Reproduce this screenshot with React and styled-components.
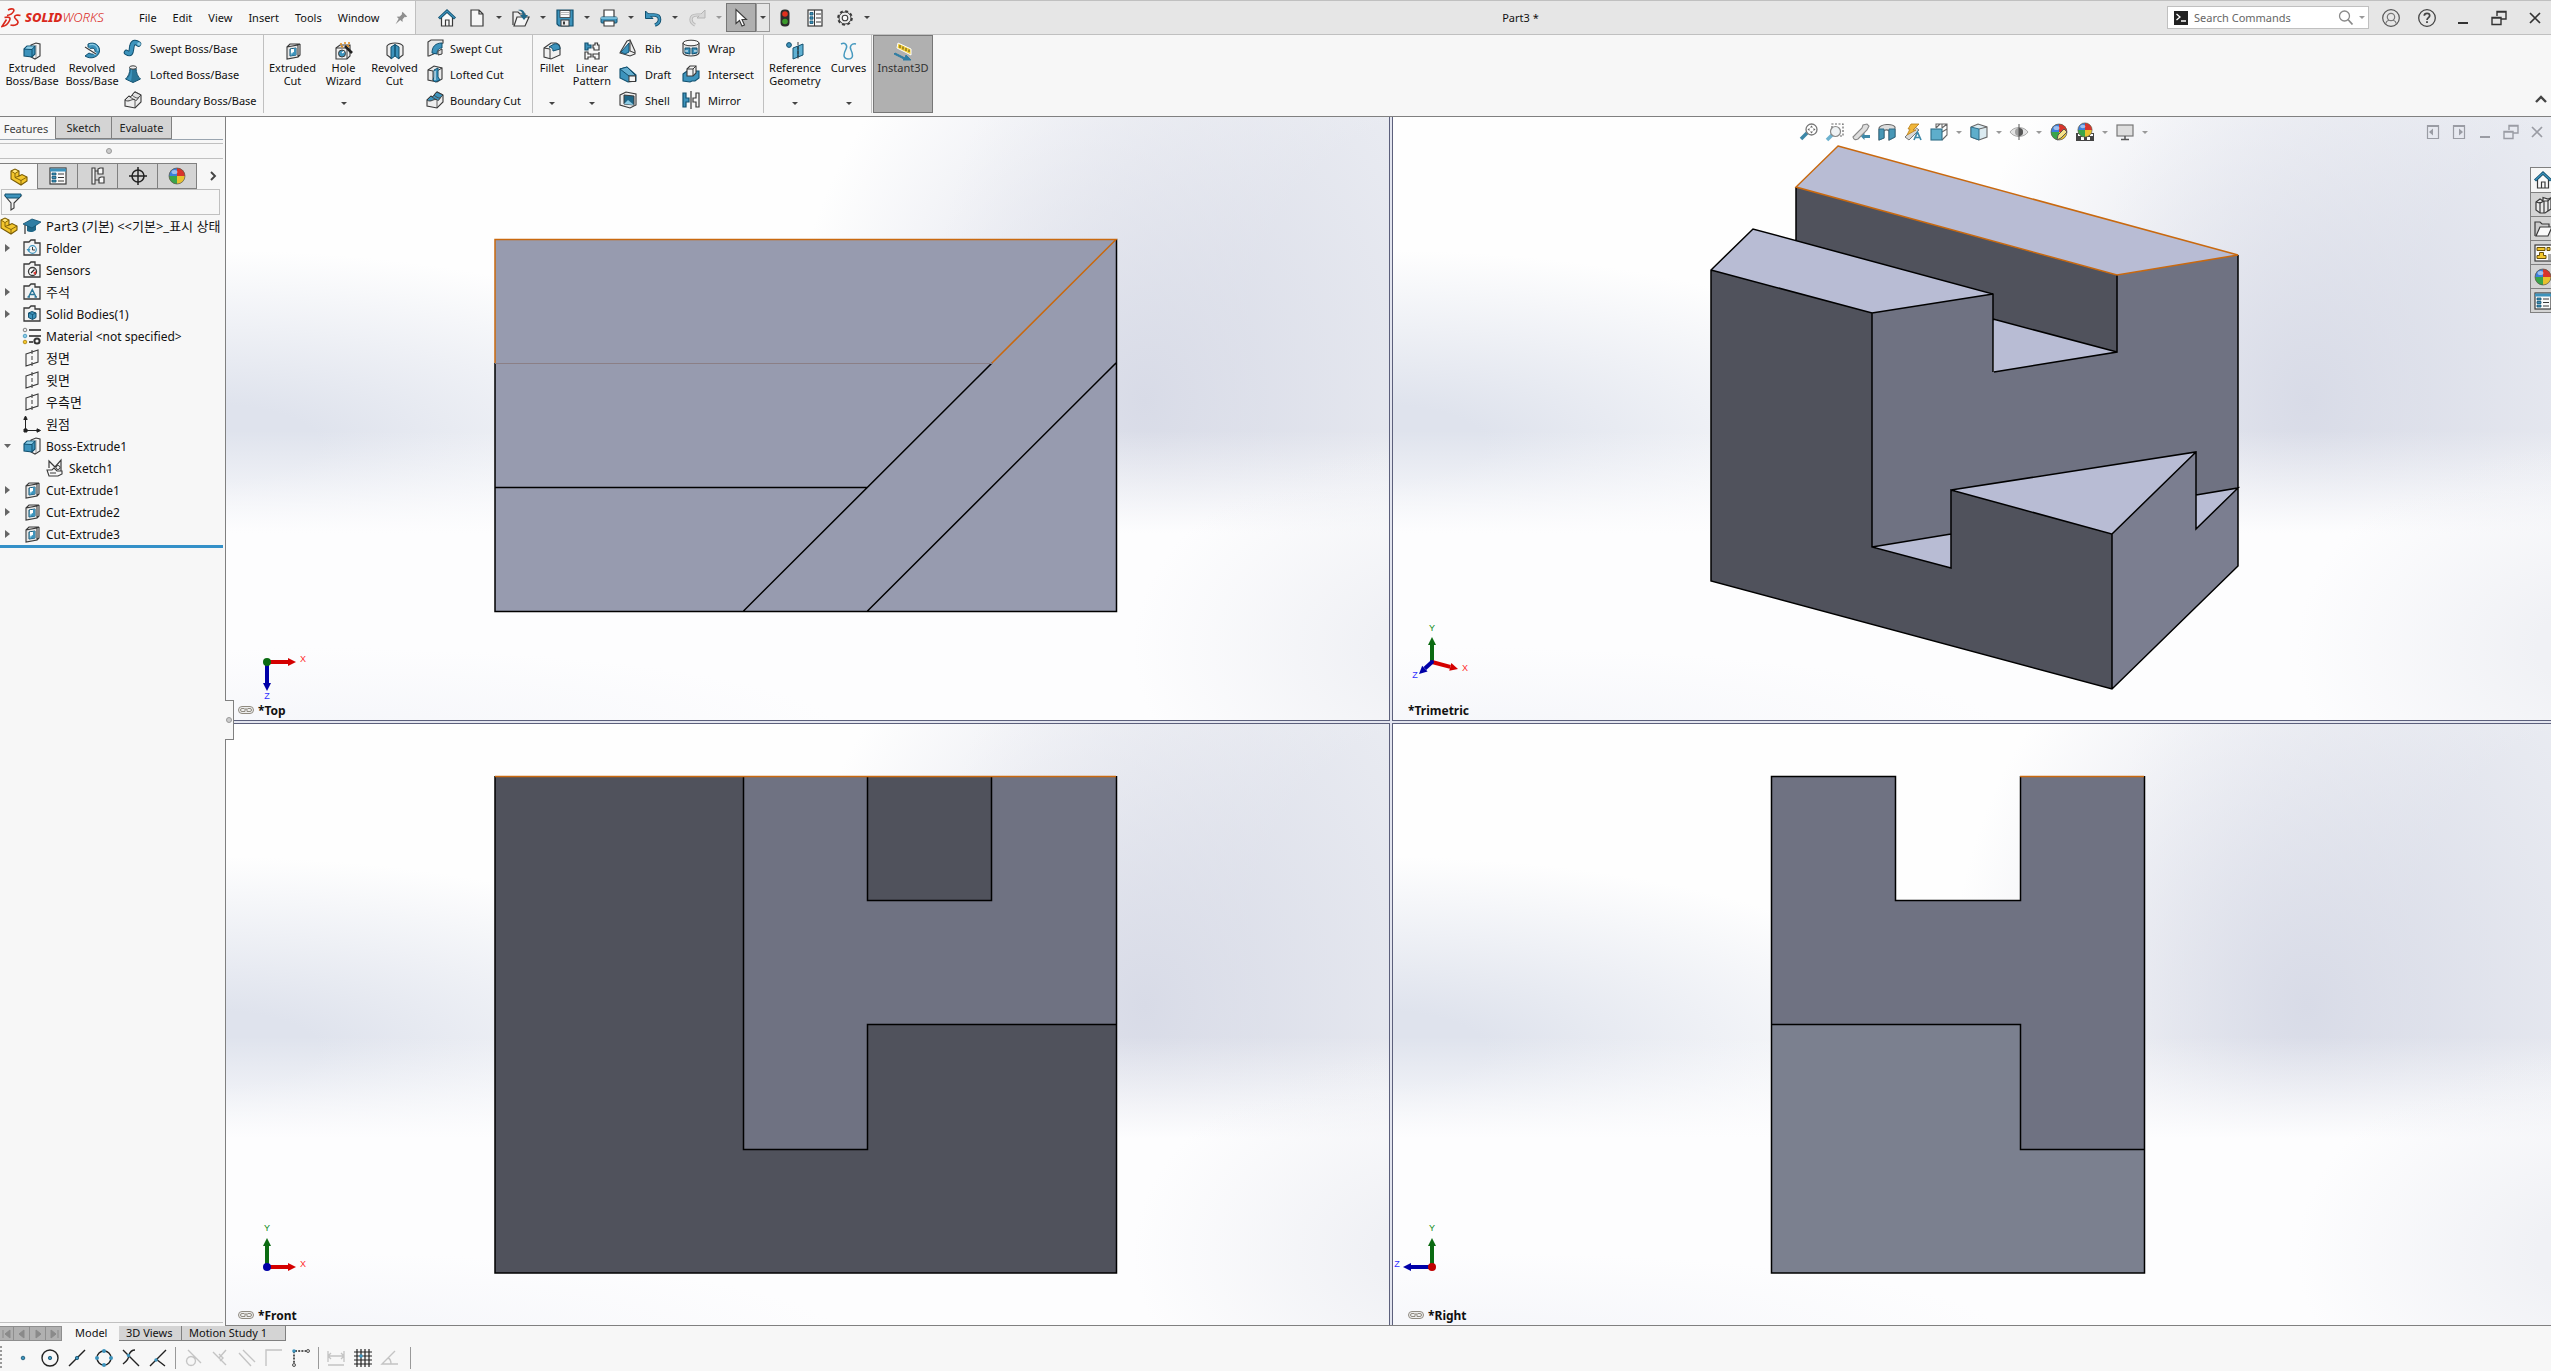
import React from "react";
import styled, { createGlobalStyle } from "styled-components";

const INK = "#3a3a3a";
const BLUE = "#3d93bc";
const SKY = "#8ccbe4";
const NAVY = "#12506f";

const Global = createGlobalStyle`
  html, body, #root { height: 100%; }
  body { margin: 0; background: #f7f7f7; color: #111; }
  body, button, input { font-family: "Noto Sans", "Noto Sans CJK KR", sans-serif; font-size: 11px; line-height: 13px; }
  * { box-sizing: border-box; }
  button { border: 0; padding: 0; background: none; color: inherit; }
  ul { list-style: none; margin: 0; padding: 0; }
`;

/* ---------- icons ---------- */

const ball = (
  <>
    <circle cx="9" cy="9" r="8" fill="#e9c12e" />
    <path d="M9 9V1A8 8 0 0 0 1 9Z" fill="#3c7fdc" />
    <path d="M9 9V1A8 8 0 0 1 17 9Z" fill="#d8342c" />
    <path d="M9 9H1A8 8 0 0 0 9 17Z" fill="#3aa54a" />
    <circle cx="9" cy="9" r="8" fill="none" stroke="#555" strokeWidth="0.7" />
    <ellipse cx="6.500" cy="5" rx="3" ry="2" fill="#fff" opacity="0.5" />
  </>
);
const folder = <path d="M1 16V3H6L8 1H12V4H17V16Z" fill="#f2f2f2" stroke={INK} strokeWidth="1.3" />;
const cutBox = (
  <>
    <path d="M3 5L14 3V15L3 17ZM3 5L6 2H16L14 3M16 2V13L14 15" fill="#e6e6e6" stroke={INK} strokeWidth="1.1" />
    <path d="M6 7L12 6V13L6 14Z" fill={SKY} stroke={NAVY} />
    <path d="M9 6.500V11L6 14L12 13V6Z" fill={BLUE} />
    <path d="M7 7H10V10L7 11Z" fill="#fff" />
  </>
);
const house = (
  <>
    <path d="M3.500 8V17H14.500V8L9 3Z" fill="#fafafa" stroke={INK} strokeWidth="1.2" />
    <path d="M7.500 17V11H11V17" fill="none" stroke={INK} strokeWidth="1.2" />
    <path d="M1 9.500L9 2L17 9.500" fill="none" stroke={NAVY} strokeWidth="3" />
    <path d="M1.500 9L9 2L16.500 9" fill="none" stroke={BLUE} strokeWidth="1.2" />
  </>
);
const list = (
  <>
    <rect x="1" y="1" width="16" height="16" fill="#fafafa" stroke={INK} strokeWidth="1.2" />
    <path d="M1 3H17" stroke={BLUE} strokeWidth="3" />
    <path d="M3 6H7V8H3ZM3 9.500H7V11.500H3ZM3 13H7V15H3Z" fill={BLUE} stroke={NAVY} strokeWidth="0.8" />
    <path d="M9 7H15M9 10.500H15M9 14H15" stroke={INK} strokeWidth="1.2" />
  </>
);
const bossBox = (
  <>
    <path d="M8 3L13 1L17 2V14L12 17L8 15Z" fill="#f4f4f4" stroke={INK} strokeWidth="1.1" />
    <path d="M13 3V16" stroke="#999" />
    <path d="M1 7L4 4H12V12L9 15L1 14Z" fill={BLUE} stroke={NAVY} strokeWidth="1.1" />
    <path d="M1 7L9 7.500L12 4M9 7.500V15" fill="none" stroke={NAVY} />
    <path d="M2 6.500L4.500 4.500H11L8.500 7Z" fill={SKY} />
  </>
);
const yellowPart = (
  <>
    <path d="M1 3L5 1L9 3V8L12 6.500L17 9V13L11 17L1 11Z" fill="#f3c62c" stroke="#7a5c06" strokeWidth="1.1" />
    <path d="M1 3L5 5.500L9 3M5 5.500V9.500L11 12.500L17 9M11 12.500V17M5 9.500L9 8" fill="none" stroke="#7a5c06" strokeWidth="0.9" />
    <path d="M2.500 3.200L5 1.800L7.500 3.200L5 4.700Z" fill="#ffe889" />
  </>
);
const boundary = (top) => (
  <>
    <path d="M1 9L5 5C7 8 8 3 11 1L17 4V11L11 17L1 15Z" fill="#eee" stroke={INK} strokeWidth="1.1" />
    <path d="M1 9L5 5C7 8 8 3 11 1L17 4C14 6 13 11 11 9C8 7 5 12 1 9Z" fill={top} stroke={INK} />
    <path d="M5 5C7 7 9 8 11 9M8 4C10 6 12 7 14 7M11 10V17" fill="none" stroke={INK} strokeWidth="0.8" />
  </>
);

const ICONS = {
  home: house,
  page: <path d="M3 1H11L15 5V17H3ZM11 1V5H15" fill="#f6f6f6" stroke={INK} strokeWidth="1.2" />,
  open: (
    <>
      <path d="M1 16V3H6L8 5H13V8" fill="#eee" stroke={INK} strokeWidth="1.2" />
      <path d="M2 17L5 8H17L13 17Z" fill="#f6f6f6" stroke={INK} strokeWidth="1.2" />
      <path d="M6 1C10 0 13 2 13 6H16L12 11L8 6H10.500C10.500 3 9 2 6 1Z" fill="#1f6788" />
    </>
  ),
  save: (
    <>
      <path d="M1 1H17V17H3L1 15Z" fill={BLUE} stroke={NAVY} strokeWidth="1.2" />
      <rect x="4" y="1.500" width="10" height="7" fill="#fafafa" stroke={INK} strokeWidth="0.8" />
      <path d="M5 3.500H13M5 5.500H13" stroke="#aaa" strokeWidth="0.8" />
      <rect x="5" y="11" width="8" height="6" fill="#eee" stroke={INK} />
      <rect x="7" y="12.500" width="2" height="3" fill={INK} />
    </>
  ),
  print: (
    <>
      <path d="M4 8V1H14V8" fill="#fff" stroke={INK} strokeWidth="1.2" />
      <rect x="1" y="8" width="16" height="6" rx="1" fill={BLUE} stroke={NAVY} />
      <path d="M1 9H17" stroke={SKY} strokeWidth="1.500" />
      <path d="M4 12H14V17H4Z" fill="#fff" stroke={INK} strokeWidth="1.1" />
    </>
  ),
  undo: (
    <>
      <path d="M4 6H10C14 6 15.500 8 15.500 10.500C15.500 12.500 14 15 11 16" fill="none" stroke={NAVY} strokeWidth="3.600" />
      <path d="M1.500 2V9.500H9Z" fill={BLUE} stroke={NAVY} />
      <path d="M4 6H10C14 6 15.500 8 15.500 10.500C15.500 12.500 14 15 11 16" fill="none" stroke={BLUE} strokeWidth="1.800" />
    </>
  ),
  redo: (
    <>
      <path d="M14 6H9C5 6 3 8 3 10.500C3 13 4 14.500 7 16" fill="none" stroke="#b5b5b5" strokeWidth="3.200" />
      <path d="M17 1V9H9Z" fill="#d8d8d8" stroke="#b5b5b5" />
      <path d="M14 6H9C5 6 3 8 3 10.500C3 13 4 14.500 7 16" fill="none" stroke="#d8d8d8" strokeWidth="1.600" />
    </>
  ),
  cursor: <path d="M4 0.500V14.500L7.500 11.500L10 17L12.500 16L10 10.500H14.500Z" fill="#fff" stroke={INK} strokeWidth="1.1" />,
  traffic: (
    <>
      <rect x="4.500" y="0.500" width="9" height="17" rx="4" fill="#2c2c2c" />
      <circle cx="9" cy="5" r="2.800" fill="#e0301e" />
      <circle cx="9" cy="12.500" r="2.800" fill="#3a9a2a" />
    </>
  ),
  options: (
    <>
      <rect x="2" y="1" width="14" height="16" fill="#fafafa" stroke={INK} strokeWidth="1.2" />
      <path d="M4 3.500H7V6H4ZM4 7.800H7V10.200H4ZM4 12H7V14.500H4Z" fill={BLUE} stroke={NAVY} strokeWidth="0.8" />
      <path d="M8.500 1V17M10 5H15M10 9H15M10 13H15" stroke={INK} />
    </>
  ),
  gear: (
    <>
      <circle cx="9" cy="9" r="6.700" fill="none" stroke={INK} strokeWidth="2.200" strokeDasharray="2.900 2.360" />
      <circle cx="9" cy="9" r="6" fill="#ececec" stroke={INK} strokeWidth="1" />
      <circle cx="9" cy="9" r="2.800" fill="#fafafa" stroke={INK} strokeWidth="1.1" />
    </>
  ),
  pin: <path d="M11 1L17 7L15 8L14 7.500L11 10.500V14L8 11.500L2 17L6 10L3.500 7.500L7.500 7L10.500 4L10 3Z" fill="#8f8f8f" />,
  terminal: (
    <>
      <rect x="2" y="2" width="14" height="14" fill="#222" />
      <path d="M4.500 5L8 8L4.500 11M9 12H14" fill="none" stroke="#fff" strokeWidth="1.300" />
    </>
  ),
  search: (
    <>
      <circle cx="7.500" cy="7" r="5" fill="none" stroke="#8a8a8a" strokeWidth="1.300" />
      <path d="M11 10.500L15.500 15.500" stroke="#8a8a8a" strokeWidth="1.800" />
    </>
  ),
  user: (
    <>
      <circle cx="9" cy="9" r="8.300" fill="none" stroke="#555" strokeWidth="1.200" />
      <circle cx="9" cy="8" r="3.700" fill="none" stroke="#777" strokeWidth="1.200" />
      <path d="M3.500 15C4 12.500 5.500 11.500 7 11M14.500 15C14 12.500 12.500 11.500 11 11" fill="none" stroke="#777" strokeWidth="1.200" />
    </>
  ),
  help: (
    <>
      <circle cx="9" cy="9" r="8.300" fill="none" stroke="#444" strokeWidth="1.300" />
      <path d="M6.300 6.800C6.300 3.600 11.700 3.700 11.700 6.700C11.700 8.500 9 8.800 9 11" fill="none" stroke="#444" strokeWidth="1.700" />
      <rect x="8.100" y="12.200" width="1.800" height="1.800" fill="#444" />
    </>
  ),
  minimize: <path d="M4 14H14" stroke="currentColor" strokeWidth="2" />,
  restore: <path d="M7 7V2.500H16V10H11M2 8.500H11V15.500H2ZM7 3H16M2 9H11" fill="none" stroke="currentColor" strokeWidth="1.400" />,
  close: <path d="M4 4L14 14M14 4L4 14" stroke="currentColor" strokeWidth="1.700" />,
  chevronUp: <path d="M4 12L9 7L14 12" fill="none" stroke="#444" strokeWidth="2.400" />,
  chevronRight: <path d="M7 5L11 9L7 13" fill="none" stroke="#444" strokeWidth="1.900" />,
  boss: bossBox,
  revolve: (
    <>
      <path d="M5 2C12 -1 17 4 16.500 9C16 15 8 18 2 14L6 11C9 13 12 12 12 9C12 6 9 5 5 8Z" fill={BLUE} stroke={NAVY} />
      <path d="M6 3C11 1 15 4 15 9" fill="none" stroke={SKY} strokeWidth="1.200" />
      <path d="M2 5L13 12" stroke="#fff" strokeWidth="2.500" />
      <path d="M2 5L13 12" stroke={INK} strokeWidth="1.100" />
    </>
  ),
  sweep: (
    <>
      <path d="M2.500 13.500C8 17 7 11 8 7C9 2.500 12 3 14.500 5" fill="none" stroke={NAVY} strokeWidth="5.500" strokeLinecap="round" />
      <path d="M2.500 13.500C8 17 7 11 8 7C9 2.500 12 3 14.500 5" fill="none" stroke={BLUE} strokeWidth="3.600" strokeLinecap="round" />
      <circle cx="15" cy="5" r="1.800" fill={SKY} />
    </>
  ),
  loft: (
    <>
      <path d="M6 3C6 8 4 12 1.500 14L9 17.500L16.500 14C14 12 12 8 12 3Z" fill="#2b7698" stroke={NAVY} />
      <path d="M7 4C7 9 5.500 12 3 14L7 16C8 12 8 8 8 4Z" fill={BLUE} />
      <ellipse cx="9" cy="2.500" rx="3.500" ry="1.700" fill="#eee" stroke={INK} />
    </>
  ),
  boundary: boundary("#e2e2e2"),
  boundaryCut: boundary(BLUE),
  cut: cutBox,
  hole: (
    <>
      <path d="M1 6L5 3H15V14L12 17H1Z" fill="#f0f0f0" stroke={INK} strokeWidth="1.100" />
      <path d="M1 6H12V17M12 6L15 3" fill="none" stroke={INK} />
      <circle cx="7" cy="11.500" r="3.500" fill={BLUE} stroke={INK} />
      <path d="M7 11L9 9.500" stroke="#fff" strokeWidth="1.500" />
      <path d="M10 4L17 11" stroke="#222" strokeWidth="2.600" />
      <path d="M5 2H7M9 1H11M13 1H15M6 4L8 5M12 3L14 5" stroke="#e08a1a" strokeWidth="1.500" />
    </>
  ),
  revolveCut: (
    <>
      <path d="M1 4C4 0 14 0 17 4V13L13 16L10 13L9 9L8 13L5 16L1 13Z" fill="#efefef" stroke={INK} strokeWidth="1.100" />
      <path d="M5 5L9 2.500V14L5 17ZM13 5L9 2.500V14L13 17Z" fill={BLUE} stroke={NAVY} />
    </>
  ),
  sweepCut: (
    <>
      <path d="M2 3L5 1H17V4C12 5 10 8 10 14L3 17H2Z" fill="#e9e9e9" stroke={INK} strokeWidth="1.100" />
      <path d="M6 14C6 8 9 4 16 4V9C12 9 11 12 11 15Z" fill={BLUE} stroke={NAVY} />
      <path d="M12 12L16 10V15L12 16Z" fill="#ddd" stroke={INK} />
    </>
  ),
  loftCut: (
    <>
      <path d="M2 5L8 1L16 3V14L11 17L2 15Z" fill="#e9e9e9" stroke={INK} strokeWidth="1.100" />
      <path d="M2 5L7 6V16M16 3L11 6" fill="none" stroke={INK} />
      <path d="M8 5L12 3V12L14 15L9 17L7 15L8 12Z" fill={BLUE} stroke={NAVY} />
      <path d="M9 6V15" stroke="#fff" />
    </>
  ),
  fillet: (
    <>
      <path d="M1 6L8 1H13C16 2 17 4 17 6V13L8 17L1 15Z" fill="#f0f0f0" stroke={INK} strokeWidth="1.100" />
      <path d="M1 6L7 7V17" fill="none" stroke={INK} />
      <path d="M6 5L11 2C15 1 17 4 17 7L10 9C10 7 9 5 6 5Z" fill={BLUE} stroke={NAVY} />
    </>
  ),
  pattern: (
    <>
      <path d="M2 1H5V3H8V6H5V8H2Z" fill={BLUE} stroke={NAVY} strokeWidth="1.200" />
      <path d="M11 8V6H10V3H12V1H14.500V3H16V8ZM2 10H5V12H8V15H5V17H2ZM16 10V12H10V15H12V17H16Z" fill="#f7f7f7" stroke={INK} strokeWidth="1.200" />
    </>
  ),
  rib: (
    <>
      <path d="M8 2L11 1L16 12V15L11 17L1 14L2 12Z" fill="#eee" stroke={INK} strokeWidth="1.100" />
      <path d="M2 13L10 4V13L6 15Z" fill={BLUE} stroke={NAVY} />
      <path d="M11 2V12L16 14" fill="none" stroke={INK} />
    </>
  ),
  draft: (
    <>
      <path d="M1 4L8 2L17 10V16L9 17L1 13Z" fill={BLUE} stroke={NAVY} strokeWidth="1.100" />
      <path d="M1 4L10 11H17L8 2Z" fill="#63aed0" stroke={NAVY} />
      <rect x="10" y="11" width="6.500" height="5.500" fill="#f4f4f4" stroke={INK} />
    </>
  ),
  shell: (
    <>
      <path d="M1 4L7 1L17 3V14L11 17L1 14Z" fill="#eee" stroke={INK} strokeWidth="1.100" />
      <path d="M5 4L15 5V14L5 13Z" fill="#1f6788" stroke={INK} />
      <path d="M5 13L9 9L15 14Z" fill={SKY} />
    </>
  ),
  wrap: (
    <>
      <path d="M1 4V14C3 18 15 18 17 14V4" fill="#e4e4e4" stroke={INK} strokeWidth="1.100" />
      <ellipse cx="9" cy="4" rx="8" ry="2.800" fill="#fafafa" stroke={INK} />
      <path d="M3 9H8V15L3 14ZM10 9H15V14L10 15Z" fill={BLUE} stroke={NAVY} />
      <path d="M3 12H6M12 12H15" stroke="#fff" />
    </>
  ),
  intersect: (
    <>
      <path d="M1 9L5 6H17V13L13 16H10L8 17L1 16Z" fill={BLUE} stroke={NAVY} strokeWidth="1.100" />
      <path d="M5 4L8 1H14V8L11 11H5Z" fill="#f2f2f2" stroke={INK} strokeWidth="1.100" />
      <path d="M5 4H11V11M11 4L14 1" fill="none" stroke={INK} />
    </>
  ),
  mirror: (
    <>
      <path d="M1 2H4V7H7V11H4V16H1Z" fill={BLUE} stroke={NAVY} strokeWidth="1.200" />
      <path d="M17 2H14V7H11V11H14V16H17Z" fill="#fafafa" stroke={INK} strokeWidth="1.200" />
      <path d="M9 0V18" stroke={INK} strokeWidth="1.200" />
    </>
  ),
  reference: (
    <>
      <circle cx="3" cy="3" r="2.400" fill={BLUE} stroke={NAVY} />
      <path d="M7 6L12 4V15L7 17ZM12 4L17 2V13L12 15Z" fill="#5fb0d2" stroke={NAVY} />
      <path d="M12 0V18" stroke={INK} strokeDasharray="3 1.500" />
    </>
  ),
  curves: <path d="M1 2C5 0 8 3 6 7C4 11 2 16 8 17C14 17 13 12 11 8C9 4 12 1 16 2" fill="none" stroke="#4699bf" strokeWidth="1.500" />,
  instant: (
    <>
      <path d="M4 1L17 7V13L3 6Z" fill="#f3cf3a" stroke="#fff" />
      <path d="M6 3V6M9 4.500V7.500M12 6V9M15 7.500V10" stroke="#5b4a10" />
      <path d="M1 11L11 16L12 13L17 18H9L10 17L0 12Z" fill="#2f7da3" stroke="#2f7da3" />
    </>
  ),
  part: yellowPart,
  list,
  config: (
    <>
      <path d="M3 1H6V17H3ZM6 4H9M6 13H10" fill="#f3f3f3" stroke={INK} strokeWidth="1.100" />
      <path d="M9 2L11 1H14V7H9ZM10 11L12 10H15V16H10Z" fill="#f7f7f7" stroke={INK} strokeWidth="1.200" />
    </>
  ),
  target: (
    <>
      <circle cx="9" cy="9" r="6" fill="none" stroke="#222" strokeWidth="1.500" />
      <path d="M9 0V18M0 9H18" stroke="#222" strokeWidth="1.500" />
    </>
  ),
  ball,
  filter: (
    <>
      <path d="M1 3L7 10V17L10 15V10L17 3Z" fill="#f4f4f4" stroke={INK} strokeWidth="1.100" />
      <path d="M1 1H17V3L15 5H3L1 3Z" fill={BLUE} stroke={NAVY} />
    </>
  ),
  hat: (
    <>
      <path d="M4 8V14C7 16 11 15 13 13V7Z" fill="#1f6788" />
      <path d="M0 7L9 2L18 5L9 11Z" fill="#2f7da3" stroke={NAVY} strokeWidth="0.800" />
      <path d="M2 8V17" stroke="#333" strokeWidth="1.200" />
    </>
  ),
  history: (
    <>
      {folder}
      <circle cx="9.500" cy="10.500" r="3.800" fill="none" stroke={BLUE} strokeWidth="1.200" />
      <path d="M9.500 8V11H12" fill="none" stroke={INK} />
      <path d="M3.500 10L5.500 13L7.500 10Z" fill={BLUE} />
    </>
  ),
  sensors: (
    <>
      {folder}
      <circle cx="9.500" cy="10.500" r="4" fill="#fff" stroke={INK} strokeWidth="1.300" />
      <path d="M8 12L11.500 8.500" stroke="#222" strokeWidth="1.300" />
      <path d="M10 12L13 10V14Z" fill="#d8342c" />
    </>
  ),
  notes: (
    <>
      {folder}
      <path d="M5.500 14L9.300 6.500L13 14M7 11.500H11.500M4.500 14H7M11.500 14H14" fill="none" stroke="#2b7698" strokeWidth="1.400" />
    </>
  ),
  bodies: (
    <>
      {folder}
      <path d="M5.500 8L9 6.500L13 8V12.500L9.500 14.500L5.500 12.500Z" fill={BLUE} stroke={NAVY} />
      <path d="M5.500 8L9.500 9.500L13 8M9.500 9.500V14.500" fill="none" stroke={NAVY} strokeWidth="0.800" />
    </>
  ),
  material: (
    <>
      <path d="M6 3H18M6 9H18M6 15H10" stroke="#222" strokeWidth="1.500" />
      <circle cx="2" cy="3" r="1.800" fill="#eee" stroke="#666" strokeWidth="0.800" />
      <circle cx="2" cy="9" r="1.800" fill={SKY} stroke={BLUE} strokeWidth="0.800" />
      <circle cx="2" cy="15" r="1.800" fill="#f3c62c" stroke="#a8800a" strokeWidth="0.800" />
      <circle cx="14" cy="14" r="2.600" fill="none" stroke="#333" strokeWidth="2" />
    </>
  ),
  plane: (
    <>
      <path d="M3 5L15 1V13L3 17Z" fill="none" stroke={INK} strokeWidth="1.100" />
      <path d="M9 1V17" stroke={INK} strokeDasharray="4 2" />
    </>
  ),
  origin: <path d="M2 15.500H15M2.500 15.500V3M0.800 4.500L2.500 1L4.200 4.500ZM14 13.800L17.500 15.500L14 17.200ZM1 14H4V17H1Z" fill="#222" stroke="#222" />,
  sketch: (
    <>
      <path d="M3 9V2L9 8L15 1V12" fill="none" stroke={INK} strokeWidth="1.200" />
      <path d="M1 11H6L8 9L11 12H16V15L12 17H3Z" fill="#f7f7f7" stroke={INK} strokeWidth="1.100" />
      <circle cx="12" cy="8.500" r="2" fill="none" stroke={INK} />
      <path d="M4 14H10" stroke={INK} />
    </>
  ),
  zoomFit: (
    <>
      <path d="M1 16L7 10" stroke="#3d88a8" strokeWidth="3.600" />
      <circle cx="11.500" cy="6.500" r="5.500" fill="#fff" stroke="#777" strokeWidth="1.300" />
      <path d="M11.500 2.500L13 4.500H10ZM11.500 10.500L13 8.500H10ZM7.500 6.500L9.500 5V8ZM15.500 6.500L13.500 5V8Z" fill="#666" />
    </>
  ),
  zoomArea: (
    <>
      <path d="M6 5V1H17V13H13" fill="none" stroke="#666" strokeDasharray="2 1.500" strokeWidth="1.200" />
      <path d="M1 17L6 12" stroke="#6db2cf" strokeWidth="3.600" />
      <circle cx="9.500" cy="8.500" r="5" fill="#eef2f4" stroke="#888" strokeWidth="1.200" />
    </>
  ),
  previous: (
    <>
      <path d="M1 14L10 5L11 2L15 1L17 3L15 7L6 16Q2 18 1 14Z" fill="#dedede" stroke="#888" strokeWidth="1.100" />
      <path d="M9 13.500L12.500 10V12H18V15H12.500V17Z" fill="#3d88a8" />
    </>
  ),
  section: (
    <>
      <path d="M1 5C3 1 14 0 17 4V14L11 17V8C9 6 7 7 6 8V15L1 17Z" fill="#ddd" stroke="#666" strokeWidth="1.100" />
      <path d="M1 6H6V15L1 17ZM11 6H17V14L11 17Z" fill="#4897b6" stroke="#2f6d88" />
    </>
  ),
  annotate: (
    <>
      <path d="M1 14L11 4L15 7L5 17Z" fill="#d8d8d8" stroke="#777" />
      <path d="M7 1H15L9 7H12L3 12L6 6H4Z" fill="#f0b63a" stroke="#b77d1a" strokeWidth="0.800" />
      <path d="M10 17L13.500 9L17 17M11.500 14.500H16" fill="none" stroke="#3d88a8" strokeWidth="1.700" />
    </>
  ),
  orient: (
    <>
      <path d="M6 5V1H17V12L12 17M6 5L10 1M12 5L17 1M12 5V1M12 9L17 6" fill="none" stroke="#666" strokeWidth="1.100" />
      <rect x="1" y="6" width="11" height="11" fill="#5eaecb" stroke="#2f6d88" strokeWidth="1.100" />
    </>
  ),
  display: (
    <>
      <path d="M1 4L8 1L17 4V14L9 17L1 14Z" fill="#dbeaf0" stroke="#666" strokeWidth="1.100" />
      <path d="M1 4L9 6V17L1 14Z" fill="#5eaecb" stroke="#2f6d88" />
      <path d="M9 6L17 4" stroke="#666" />
    </>
  ),
  eye: (
    <>
      <path d="M0 9C4 3 14 3 18 9C14 15 4 15 0 9Z" fill="#e2e2e2" stroke="#aaa" />
      <circle cx="9" cy="9" r="4" fill="#a0a0a0" />
      <path d="M9 5A4 4 0 0 1 9 13Z" fill="#555" />
      <path d="M9 1V17" stroke="#555" />
    </>
  ),
  appearance: (
    <>
      {ball}
      <path d="M7 17L8 12L14 6L17 9L11 15Z" fill="#f5e28a" stroke="#555" />
    </>
  ),
  scene: (
    <>
      <path d="M0 10H18V18H0Z" fill="#444" />
      <path d="M2 11H5V13H2ZM14 11H17V13H14ZM5 14H8V17H5ZM11 14H14V17H11Z" fill="#fff" />
      <svg x="1" y="-1" width="16" height="16" viewBox="0 0 18 18">{ball}</svg>
    </>
  ),
  monitor: (
    <>
      <rect x="1" y="2" width="16" height="11" fill="#dedede" stroke="#777" strokeWidth="1.200" />
      <path d="M9 13V16M5 16.500H13" stroke="#555" strokeWidth="1.500" />
    </>
  ),
  paneLeft: (
    <>
      <path d="M3.500 2.500H14.500V15.500H3.500ZM3 3.500H15" fill="none" stroke="currentColor" strokeWidth="1.200" />
      <path d="M9 5.500L5 9L9 12.500Z" fill="currentColor" />
    </>
  ),
  paneRight: (
    <>
      <path d="M3.500 2.500H14.500V15.500H3.500ZM3 3.500H15" fill="none" stroke="currentColor" strokeWidth="1.200" />
      <path d="M9 5.500L13 9L9 12.500Z" fill="currentColor" />
    </>
  ),
  library: (
    <>
      <path d="M2 6L6 3L9 5L9 1.500L14 3L17 2V13L11 17H6L2 14Z" fill="#e9e9e9" stroke={INK} strokeWidth="1.200" />
      <path d="M6 6V17M10 5V17M14 4V15M2 6L6 7L10 5L14 5L17 2" fill="none" stroke={INK} strokeWidth="1.200" />
    </>
  ),
  explorer: (
    <>
      <path d="M1 16V2H6L8 4H15V7" fill="#ccc" stroke={INK} strokeWidth="1.200" />
      <path d="M2 16L6 7H18L14 16Z" fill="#fafafa" stroke={INK} strokeWidth="1.200" />
    </>
  ),
  palette: (
    <>
      <rect x="1" y="1" width="17" height="16" fill="#fafafa" stroke={INK} strokeWidth="1.200" />
      <path d="M3 3.500H11V6.500H3ZM13 3.500H16V6.500H13ZM5.500 8.500H9.500V11.500H12V14.500H3V11.500H5.500Z" fill="#f3c62c" stroke="#6b520a" />
      <rect x="14" y="10" width="4" height="6" fill="#aaa" />
    </>
  ),
  point: <circle cx="9" cy="9" r="1.800" fill={BLUE} stroke={NAVY} strokeWidth="0.800" />,
  circle: (
    <>
      <circle cx="9" cy="9" r="8" fill="none" stroke="#222" strokeWidth="1.400" />
      <circle cx="9" cy="9" r="1.700" fill={BLUE} stroke={NAVY} strokeWidth="0.800" />
    </>
  ),
  line: (
    <>
      <path d="M1 17L17 1" stroke="#222" strokeWidth="1.500" />
      <circle cx="9" cy="9" r="1.700" fill={BLUE} stroke={NAVY} strokeWidth="0.800" />
    </>
  ),
  quadrant: (
    <>
      <circle cx="9" cy="9" r="7" fill="none" stroke="#222" strokeWidth="1.400" />
      <path d="M9 2V2.010M9 16V16.010M2 9V9.010M16 9V9.010" stroke={BLUE} strokeWidth="4" strokeLinecap="round" />
    </>
  ),
  intersection: (
    <>
      <path d="M1 1L17 17M1 15C5 12 7 9 7 6C8 3 10 1 13 1" fill="none" stroke="#222" strokeWidth="1.400" />
      <circle cx="6.500" cy="6.500" r="1.700" fill={BLUE} />
    </>
  ),
  nearest: (
    <>
      <path d="M1 17L17 1M7 10L16 17" stroke="#222" strokeWidth="1.400" />
      <circle cx="7" cy="11" r="1.700" fill={BLUE} />
    </>
  ),
  tangent: <path d="M4 1L17 14M7 7.500A4.500 4.500 0 1 0 7.010 7.500" fill="none" stroke="#c4c4c4" strokeWidth="1.400" />,
  perpendicular: <path d="M2 3L15 16M15 1L8 9M8 5L12 9L9 12" fill="none" stroke="#c4c4c4" strokeWidth="1.400" />,
  parallel: <path d="M5 1L17 13M1 4L13 17" fill="none" stroke="#c4c4c4" strokeWidth="1.400" />,
  corner: <path d="M1 17V1H17" fill="none" stroke="#c4c4c4" strokeWidth="1.400" />,
  dotted: (
    <>
      <path d="M2 17V2H17" fill="none" stroke="#222" strokeDasharray="2 1.200" strokeWidth="1.500" />
      <circle cx="2" cy="2" r="1.800" fill={BLUE} />
      <circle cx="16" cy="2" r="1.500" fill="#ddd" stroke="#555" />
      <circle cx="2" cy="16" r="1.500" fill="#ddd" stroke="#555" />
    </>
  ),
  length: <path d="M1 2V13M17 2V13M1 7H17M4 4L1 7L4 10M14 4L17 7L14 10M1 16H17" fill="none" stroke="#c4c4c4" strokeWidth="1.300" />,
  grid: (
    <>
      <path d="M3 0V18M7 0V18M11 0V18M15 0V18M0 3H18M0 7H18M0 11H18M0 15H18" stroke="#222" strokeWidth="1.200" />
      <circle cx="7" cy="7" r="1.800" fill={BLUE} />
    </>
  ),
  angle: <path d="M14 2L1 15H17M7 9C10 10 10 13 10 15" fill="none" stroke="#c4c4c4" strokeWidth="1.400" />,
};

const Svg = styled.svg`
  width: 18px;
  height: 18px;
  flex: none;
  display: block;
  overflow: visible;
`;
const Icon = ({ name }) => (
  <Svg viewBox="0 0 18 18" aria-hidden="true">
    {ICONS[name]}
  </Svg>
);

const Caret = styled.span`
  display: block;
  border: 3px solid transparent;
  border-top-color: ${(p) => (p.$soft ? "#999" : "#444")};
  border-bottom-width: 0;
`;

/* ---------- title bar ---------- */

const Window = styled.div`
  height: 100%;
  display: flex;
  flex-direction: column;
  overflow: hidden;
`;
const TitleBar = styled.header`
  display: flex;
  height: 35px;
  flex: none;
  border-top: 1px solid #c0c0c0;
  border-bottom: 1px solid #c0c0c0;
`;
const Brand = styled.div`
  display: flex;
  align-items: center;
  flex: none;
  width: 131px;
  padding-left: 1px;
  gap: 4px;
  color: #da291c;
  font-size: 13px;
  font-style: italic;
  font-weight: 300;
  b { font-weight: 800; }
`;
const Mark = styled.svg`
  width: 20px;
  height: 20px;
  flex: none;
`;
const Menu = styled.nav`
  display: flex;
  flex: none;
  align-items: center;
  button { padding: 0 8px; height: 32px; }
`;
const PinButton = styled.button`
  flex: 1;
  display: grid;
  place-items: center;
  svg { width: 14px; height: 14px; }
`;
const Start = styled.div`
  width: 415px;
  flex: none;
  display: flex;
`;
const Quick = styled.div`
  flex: 1;
  display: flex;
  align-items: center;
  background: #e6e6e6;
  border-left: 1px solid #c0c0c0;
  padding-left: 16px;
`;
const ToolButton = styled.button`
  width: ${(p) => p.$w || 30}px;
  height: 29px;
  flex: none;
  display: grid;
  place-items: center;
  color: ${(p) => p.$color || "#333"};
  ${(p) => p.$active && "background: #b0b0b0; box-shadow: inset 0 0 0 1px #777;"}
  ${(p) => p.$framed && "box-shadow: inset 0 0 0 1px #999;"}
`;
const DocTitle = styled.div`
  flex: 1;
  text-align: center;
`;
const Search = styled.label`
  display: flex;
  align-items: center;
  width: 202px;
  height: 23px;
  padding: 0 3px 0 4px;
  gap: 4px;
  background: #fff;
  border: 1px solid #c0c0c0;
  input {
    flex: 1;
    min-width: 0;
    border: 0;
    outline: 0;
    padding: 0;
    background: none;
    &::placeholder { color: #666; opacity: 1; }
  }
`;
const WindowButtons = styled.div`
  display: flex;
  gap: 4px;
  margin-left: 6px;
`;

/* ---------- ribbon ---------- */

const Ribbon = styled.div`
  display: flex;
  height: 82px;
  flex: none;
  border-bottom: 1px solid #808080;
  padding-bottom: 3px;
`;
const Group = styled.section`
  display: flex;
  padding-left: ${(p) => p.$start || 0}px;
  border-right: 1px solid #c0c0c0;
`;
const BigButton = styled.button`
  width: ${(p) => p.$w}px;
  display: flex;
  flex-direction: column;
  align-items: center;
  padding-top: 7px;
  white-space: pre;
  ${(p) => p.$active && "background: #b0b0b0; border: 1px solid #777; margin-left: 1px; padding-top: 6px; color: #333;"}
  > span:first-of-type { height: 41px; margin-top: 1px; text-align: center; }
`;
const Column = styled.div`
  width: ${(p) => p.$w}px;
  padding-left: ${(p) => p.$pad}px;
  display: grid;
  grid-template-rows: repeat(3, 26px);
  button { display: flex; align-items: center; gap: ${(p) => p.$gap || 8}px; white-space: nowrap; }
`;
const RibbonEnd = styled.div`
  flex: 1;
  display: flex;
  justify-content: flex-end;
  align-items: flex-end;
`;

/* ---------- body ---------- */

const Body = styled.main`
  flex: 1;
  min-height: 0;
  display: flex;
`;
const Side = styled.aside`
  width: 226px;
  flex: none;
  border-right: 1px solid #808080;
  position: relative;
  display: flex;
  flex-direction: column;
`;
const RibbonTabs = styled.div`
  display: flex;
  height: 23px;
  margin-right: 2px;
  border-bottom: 1px solid #9aa5b0;
`;
const RibbonTab = styled.button`
  width: ${(p) => p.$w}px;
  color: #222;
  ${(p) => (p.$active ? "color: #444; padding-right: 3px;" : "background: #d4d4d4; border: 1px solid #808080; border-top: 0; border-left-width: " + (p.$first ? 1 : 0) + "px;")}
`;
const Grip = styled.div`
  height: 16px;
  margin: 3px 2px 4px 0;
  padding-right: 5px;
  display: grid;
  place-items: center;
  border-top: 1px solid #c0c0c0;
  border-bottom: 1px solid #c0c0c0;
`;
const Knob = styled.span`
  width: 6px;
  height: 6px;
  border-radius: 50%;
  background: #ccc;
  border: 1px solid #999;
`;
const PanelTabs = styled.div`
  display: grid;
  grid-template-columns: 37px repeat(4, 40px) 28px;
  height: 26px;
  button { display: grid; place-items: center; }
  button:not(:first-child):not(:last-child) {
    background: #d4d4d4;
    border: 1px solid #808080;
    border-right-width: 0;
  }
  button:nth-child(5) { border-right-width: 1px !important; }
  button:first-child { border-top: 1px solid #808080; }
  button:last-child { padding-left: 4px; }
`;
const Filter = styled.label`
  display: flex;
  align-items: center;
  height: 26px;
  margin: 0 5px 0 1px;
  padding-left: 2px;
  border: 1px solid #c0c0c0;
  input { flex: 1; min-width: 0; border: 0; outline: 0; background: none; }
`;
const Tree = styled.ul`
  margin-right: 2px;
  border-bottom: 3px solid #3490c8;
`;
const TreeRow = styled.li`
  height: 22px;
  display: flex;
  align-items: center;
  gap: 5px;
  padding-left: ${(p) => p.$indent || 0}px;
  white-space: nowrap;
  overflow: hidden;
  font-size: ${(p) => (p.$hangul ? 13 : 12)}px;
`;
const Toggle = styled.button`
  width: 18px;
  height: 18px;
  padding-right: 3px;
  flex: none;
  display: grid;
  place-items: center;
  svg { width: 7px; height: 8px; }
`;
const SideFoot = styled.div`
  margin-top: auto;
  margin-right: 2px;
  height: 4px;
  border-top: 1px solid #c0c0c0;
`;
const Notch = styled.div`
  position: absolute;
  left: 225px;
  top: 583px;
  z-index: 2;
  width: 9px;
  height: 40px;
  background: #f7f7f7;
  border: 1px solid #808080;
  border-left: 0;
  display: grid;
  place-items: center;
`;

/* ---------- viewports ---------- */

const Views = styled.div`
  flex: 1;
  min-width: 0;
  display: grid;
  grid-template-columns: 1163fr 1158fr;
  grid-template-rows: 603fr 601fr;
  gap: 4px;
  background: #e3e5ef;
  border-bottom: 1px solid #808080;
  overflow: hidden;
`;
const View = styled.section`
  display: grid;
  grid-template: 100% / 100%;
  min-width: 0;
  min-height: 0;
  overflow: hidden;
  outline: 1px solid #5c607c;
  background:
    radial-gradient(ellipse 26% 34% at 104% 88%, #f0f1f5 20%, transparent),
    radial-gradient(ellipse 45% 14% at 8% 102%, #f5f6fa, transparent),
    linear-gradient(rgba(253, 253, 254, 0) 52%, rgba(253, 253, 254, 0.45) 60%, #fdfdfe 69%),
    radial-gradient(ellipse 31% 74% at 79% 47%, #d8dbe7, rgba(216, 219, 231, 0.6) 40%, rgba(216, 219, 231, 0)),
    radial-gradient(ellipse 50% 32% at -2% 54%, #dfe3ed 20%, rgba(223, 227, 237, 0)),
    radial-gradient(ellipse 45% 90% at 106% 35%, #eaecf2 40%, rgba(234, 236, 242, 0)),
    #fefefe;
  > * { grid-area: 1 / 1; }
`;
const Scene = styled.svg`
  width: 100%;
  height: 100%;
  display: block;
`;
const Hud = styled.div`
  display: flex;
  flex-direction: column;
  z-index: 1;
  min-width: 0;
`;
const Heads = styled.div`
  display: grid;
  grid-template-columns: 1fr auto 1fr;
  height: 30px;
  align-items: center;
  padding: 0 1px 0 5px;
`;
const HeadsBar = styled.div`
  display: flex;
  justify-content: flex-end;
  grid-column: ${(p) => p.$col};
`;
const TaskPane = styled.div`
  align-self: flex-end;
  width: 21px;
  margin-top: 20px;
  border: 1px solid #808080;
  border-right: 0;
  overflow: hidden;
`;
const TaskButton = styled.button`
  width: 28px;
  height: 24px;
  display: flex;
  align-items: center;
  padding-left: 3px;
  background: ${(p) => (p.$active ? "#f7f7f7" : "#d4d4d4")};
  & + & { border-top: 1px solid #808080; }
`;
const Corner = styled.footer`
  margin-top: auto;
`;
const Triad = styled.svg`
  width: 90px;
  height: 80px;
  display: block;
  overflow: visible;
  text { font: 9px "Liberation Sans", sans-serif; text-anchor: middle; }
`;
const ViewName = styled.div`
  height: 20px;
  display: flex;
  align-items: center;
  gap: 4px;
  padding-left: ${(p) => p.$pad}px;
  font-weight: 700;
  font-size: 12px;
`;
const Chain = styled.svg`
  width: 16px;
  height: 8px;
`;

const EDGE = "#000";
const HOT = "#c9690f";
const DARK = "#50525c";
const MID = "#6f7282";
const TOP = "#b8bcd4";
const Lines = ({ d, hot }) => <path d={d} fill="none" stroke={hot ? HOT : EDGE} strokeWidth="1.500" />;

const TopScene = () => (
  <Scene viewBox="0 0 1163 603">
    <rect x="269" y="122" width="621" height="372" fill="#979baf" />
    <Lines d="M269 246V494.500H890.500V122M269 370.500H641.500M766 246L517.500 494M890 246L641.500 494" />
    <path d="M269 246.500H766" stroke="#8b7f86" />
    <Lines hot d="M269 246V122.500H890L766 246" />
  </Scene>
);
const FrontScene = () => (
  <Scene viewBox="0 0 1163 601">
    <rect x="269" y="52" width="621" height="497" fill={DARK} />
    <path d="M517.500 52H890V301H641.500V425H517.500Z" fill={MID} />
    <rect x="641.500" y="52" width="124" height="124" fill={DARK} />
    <Lines d="M269 52V549H890.500V52M517.500 52V425.500H641.500V300.500H890M641.500 52V176.500H765.500V52" />
    <Lines hot d="M269 52.500H890" />
  </Scene>
);
const RightScene = () => (
  <Scene viewBox="0 0 1158 601">
    <path d="M379 52H503V176H627V52H751V549H379Z" fill={MID} />
    <path d="M379 301H627V425H751V549H379Z" fill="#7b808f" />
    <Lines d="M627.500 52V176.500H502.500V52.500H378.500V549H751.500V52M379 300.500H627.500V425.500H751" />
    <Lines hot d="M627 52.500H751" />
  </Scene>
);
const TrimetricScene = () => (
  <Scene viewBox="0 0 1158 603">
    <path d="M403 70L724 158V235L600 202L403 150Z" fill={DARK} />
    <path d="M445 29L845 138L724 158L403 70Z" fill={TOP} />
    <path d="M600 202L724 235L601 255Z" fill={TOP} />
    <path d="M479 196L600 177V255L724 235V158L845 138V372L803 378V335L558 373V417L479 430Z" fill={MID} />
    <path d="M360 112L600 177L479 196L318 153Z" fill={TOP} />
    <path d="M318 153L479 196V430L558 451V373L719 417V572L318 464Z" fill={DARK} />
    <path d="M558 417V451L479 430Z" fill={TOP} />
    <path d="M558 373L803 335L719 417Z" fill={TOP} />
    <path d="M803 378L845 371L803 412Z" fill={TOP} />
    <path d="M719 417L803 335V412L845 371V449L719 572Z" fill="#7b7e90" />
    <Lines d="M403 70V123M724 158V235L601 255M600 202L724 235M845 138V449L719 572L318 464V153L360 112L600 177V255M318 153L479 196L600 177M479 196V430L558 451V373L719 417V572M479 430L558 417M558 373L803 335V412L845 371L803 378M719 417L803 335" />
    <Lines hot d="M445 29L845 138L724 158L403 70Z" />
  </Scene>
);

const AXIS = { x: ["#d40000", "#ff2a2a", "X"], y: ["#0b6b12", "#0a8a12", "Y"], z: ["#0000a8", "#3030ff", "Z"] };
const Arrow = ({ o, to, axis, label }) => {
  const dx = to[0] - o[0];
  const dy = to[1] - o[1];
  const n = Math.hypot(dx, dy) || 1;
  const u = [dx / n, dy / n];
  const b = [to[0] - u[0] * 8, to[1] - u[1] * 8];
  const [c, t, name] = AXIS[axis];
  return (
    <g>
      <path d={`M${o}L${b}`} stroke={c} strokeWidth="4" />
      <path d={`M${to}L${b[0] - u[1] * 4} ${b[1] + u[0] * 4}L${b[0] + u[1] * 4} ${b[1] - u[0] * 4}Z`} fill={c} />
      <text x={label[0]} y={label[1]} fill={t}>{name}</text>
    </g>
  );
};

const VIEWS = [
  {
    name: "*Top", chain: true, pad: 12, scene: <TopScene />, o: [41, 42], hub: "#0b6b12",
    arrows: [["x", [70, 42], [77, 42]], ["z", [41, 71], [41, 79]]],
  },
  {
    name: "*Trimetric", pad: 15, scene: <TrimetricScene />, heads: true, o: [39, 42], hub: "#0000a8",
    arrows: [["y", [39, 17], [39, 11]], ["x", [65, 49], [72, 51]], ["z", [26, 54], [22, 58]]],
  },
  {
    name: "*Front", chain: true, pad: 12, scene: <FrontScene />, o: [41, 42], hub: "#0000a8",
    arrows: [["y", [41, 13], [41, 6]], ["x", [70, 42], [77, 42]]],
  },
  {
    name: "*Right", chain: true, pad: 15, scene: <RightScene />, o: [39, 42], hub: "#c00000",
    arrows: [["y", [39, 13], [39, 6]], ["z", [10, 42], [4, 42]]],
  },
];

const HEADS = ["zoomFit", "zoomArea", "previous", "section", "annotate", "orient", "|", "display", "|", "eye", "|", "appearance", "scene", "|", "monitor", "|"];
const DOC_BUTTONS = ["paneLeft", "paneRight", "minimize", "restore", "close"];
const TASKS = ["home", "library", "explorer", "palette", "ball", "list"];

const Viewport = ({ v }) => (
  <View aria-label={v.name}>
    {v.scene}
    <Hud>
      {v.heads && (
        <>
          <Heads>
            <HeadsBar $col={2}>
              {HEADS.map((n, i) => (
                <ToolButton key={i} $w={n === "|" ? 14 : 26} aria-label={n === "|" ? "more" : n}>
                  {n === "|" ? <Caret $soft /> : <Icon name={n} />}
                </ToolButton>
              ))}
            </HeadsBar>
            <HeadsBar $col={3}>
              {DOC_BUTTONS.map((n) => (
                <ToolButton key={n} $w={26} $color="#9a9ca4" aria-label={n}>
                  <Icon name={n} />
                </ToolButton>
              ))}
            </HeadsBar>
          </Heads>
          <TaskPane>
            {TASKS.map((n, i) => (
              <TaskButton key={n} $active={i === 0} aria-label={n}>
                <Icon name={n} />
              </TaskButton>
            ))}
          </TaskPane>
        </>
      )}
      <Corner>
        <Triad viewBox="0 0 90 80">
          {v.arrows.map(([axis, to, label]) => (
            <Arrow key={axis} o={v.o} axis={axis} to={to} label={label} />
          ))}
          <circle cx={v.o[0]} cy={v.o[1]} r={v.heads ? 2 : 4} fill={v.hub} />
        </Triad>
        <ViewName $pad={v.pad}>
          {v.chain && (
            <Chain viewBox="0 0 16 8" aria-hidden="true">
              <rect x="0.500" y="0.500" width="15" height="7" rx="3.500" fill="#eee" stroke="#8f8a80" />
              <path d="M6.500 2.500H4A1.500 1.500 0 0 0 4 5.500H7V3H9V5.500H12A1.500 1.500 0 0 0 12 2.500H9.500" fill="none" stroke="#8f8a80" />
            </Chain>
          )}
          {v.name}
        </ViewName>
      </Corner>
    </Hud>
  </View>
);

/* ---------- bottom ---------- */

const DocTabs = styled.div`
  display: flex;
  height: 15px;
  flex: none;
`;
const NavButton = styled.button`
  width: 16px;
  display: grid;
  place-items: center;
  background: #b0b0b0;
  border: 1px solid #8e8e8e;
  border-left-width: 0;
  svg { width: 10px; height: 10px; }
  &:first-child { width: 14px; }
`;
const DocTab = styled.button`
  width: ${(p) => p.$w}px;
  text-align: left;
  padding: 0 0 2px ${(p) => (p.$active ? 13 : 7)}px;
  white-space: nowrap;
  ${(p) => !p.$active && "background: #d4d4d4; border-right: 1px solid #808080; border-bottom: 1px solid #808080; padding-bottom: 1px;"}
`;
const SketchBar = styled.div`
  display: flex;
  align-items: center;
  height: 30px;
  padding: 4px 0 0;
  flex: none;
`;
const Dots = styled.span`
  width: 9px;
  height: 24px;
  background: radial-gradient(circle at 1px 1px, #999 1px, transparent 1px) 0 0 / 3px 4px repeat-y;
`;
const Divider = styled.span`
  width: 8px;
  height: 22px;
  flex: none;
  background: linear-gradient(#999, #999) center / 1px 100% no-repeat;
  &:last-child { width: 14px; }
`;

const QUICK = ["home", "page", "|", "open", "|", "save", "|", "print", "|", "undo", "|", "redo", "~", "cursor", "]", "traffic", "options", "gear", "|"];
const MENUS = ["File", "Edit", "View", "Insert", "Tools", "Window"];
const TREE = [
  ["history", "Folder", "closed"],
  ["sensors", "Sensors"],
  ["notes", "주석", "closed"],
  ["bodies", "Solid Bodies(1)", "closed"],
  ["material", "Material <not specified>"],
  ["plane", "정면"],
  ["plane", "윗면"],
  ["plane", "우측면"],
  ["origin", "원점"],
  ["boss", "Boss-Extrude1", "open"],
  ["sketch", "Sketch1", null, 23],
  ["cut", "Cut-Extrude1", "closed"],
  ["cut", "Cut-Extrude2", "closed"],
  ["cut", "Cut-Extrude3", "closed"],
];
const SKETCH = ["point", "circle", "line", "quadrant", "intersection", "nearest", "/", "tangent", "perpendicular", "parallel", "corner", "dotted", "/", "length", "grid", "angle", "/"];

const Big = ({ icon, label, w, caret, active }) => (
  <BigButton $w={w} $active={active}>
    <Icon name={icon} />
    <span>{label}</span>
    {caret && <Caret />}
  </BigButton>
);
const Small = ({ w, pad, gap, items }) => (
  <Column $w={w} $pad={pad} $gap={gap}>
    {items.map(([icon, label]) => (
      <button key={label}>
        <Icon name={icon} />
        {label}
      </button>
    ))}
  </Column>
);

export default function App() {
  return (
    <Window>
      <Global />
      <TitleBar>
        <Start>
          <Brand>
            <Mark viewBox="0 0 20 20" aria-hidden="true">
              <path d="M7 2C11 0 14 1 12.500 3.500C11.500 5.500 9 7 6 7.500" fill="none" stroke="#da291c" strokeWidth="1.600" />
              <path d="M3.500 9.500C8 8.500 10 9.500 8.500 12.500C7.500 15 4.500 18 1 18.500L5.500 11.500M19.500 7.500C16 6.500 13.500 7.500 13.500 9C13.500 11 17.500 12 17 14.500C16.500 17 13 18 9.500 17" fill="none" stroke="#da291c" strokeWidth="1.600" />
            </Mark>
            <span><b>SOLID</b>WORKS</span>
          </Brand>
          <Menu>
            {MENUS.map((m) => <button key={m}>{m}</button>)}
          </Menu>
          <PinButton aria-label="Pin"><Icon name="pin" /></PinButton>
        </Start>
        <Quick>
          {QUICK.map((n, i) =>
            "|~]".includes(n) ? (
              <ToolButton key={i} $w={14} $framed={n === "]"} aria-label="more"><Caret $soft={n === "~"} /></ToolButton>
            ) : (
              <ToolButton key={i} $active={n === "cursor"} aria-label={n}><Icon name={n} /></ToolButton>
            )
          )}
          <DocTitle>Part3 *</DocTitle>
          <Search>
            <Icon name="terminal" />
            <input placeholder="Search Commands" aria-label="Search Commands" />
            <Icon name="search" />
            <Caret $soft />
          </Search>
          <WindowButtons>
            {["user", "help", "minimize", "restore", "close"].map((n) => (
              <ToolButton key={n} $w={32} aria-label={n}><Icon name={n} /></ToolButton>
            ))}
          </WindowButtons>
        </Quick>
      </TitleBar>

      <Ribbon>
        <Group $start={2}>
          <Big icon="boss" label={"Extruded\nBoss/Base"} w={60} />
          <Big icon="revolve" label={"Revolved\nBoss/Base"} w={60} />
          <Small w={141} pad={2} items={[["sweep", "Swept Boss/Base"], ["loft", "Lofted Boss/Base"], ["boundary", "Boundary Boss/Base"]]} />
        </Group>
        <Group $start={3}>
          <Big icon="cut" label={"Extruded\nCut"} w={51} />
          <Big icon="hole" label={"Hole\nWizard"} w={51} caret />
          <Big icon="revolveCut" label={"Revolved\nCut"} w={51} />
          <Small w={112} pad={6} gap={6} items={[["sweepCut", "Swept Cut"], ["loftCut", "Lofted Cut"], ["boundaryCut", "Boundary Cut"]]} />
        </Group>
        <Group>
          <Big icon="fillet" label="Fillet" w={38} caret />
          <Big icon="pattern" label={"Linear\nPattern"} w={42} caret />
          <Small w={63} pad={6} items={[["rib", "Rib"], ["draft", "Draft"], ["shell", "Shell"]]} />
          <Small w={87} pad={6} items={[["wrap", "Wrap"], ["intersect", "Intersect"], ["mirror", "Mirror"]]} />
        </Group>
        <Group>
          <Big icon="reference" label={"Reference\nGeometry"} w={62} caret />
          <Big icon="curves" label="Curves" w={45} caret />
        </Group>
        <Big icon="instant" label="Instant3D" w={60} active />
        <RibbonEnd>
          <ToolButton $w={20} aria-label="Collapse"><Icon name="chevronUp" /></ToolButton>
        </RibbonEnd>
      </Ribbon>

      <Body>
        <Side>
          <RibbonTabs>
            <RibbonTab $w={55} $active>Features</RibbonTab>
            <RibbonTab $w={57} $first>Sketch</RibbonTab>
            <RibbonTab $w={60}>Evaluate</RibbonTab>
          </RibbonTabs>
          <Grip><Knob /></Grip>
          <PanelTabs>
            {["part", "list", "config", "target", "ball", "chevronRight"].map((n) => (
              <button key={n} aria-label={n}><Icon name={n} /></button>
            ))}
          </PanelTabs>
          <Filter>
            <Icon name="filter" />
            <input aria-label="Filter" />
          </Filter>
          <Tree>
            <TreeRow $hangul>
              <Icon name="part" />
              <Icon name="hat" />
              <span>Part3 (기본) &lt;&lt;기본&gt;_표시 상태</span>
            </TreeRow>
            {TREE.map(([icon, label, state, indent]) => (
              <TreeRow key={label} $indent={indent} $hangul={/[가-힣]/.test(label)}>
                <Toggle aria-label={state || "item"} disabled={!state}>
                  {state && (
                    <svg viewBox="0 0 7 8">
                      <path d={state === "open" ? "M0 2H7L3.500 6Z" : "M1 0L6 4L1 8Z"} fill="#666" />
                    </svg>
                  )}
                </Toggle>
                <Icon name={icon} />
                <span>{label}</span>
              </TreeRow>
            ))}
          </Tree>
          <SideFoot />
          <Notch><Knob /></Notch>
        </Side>
        <Views>
          {VIEWS.map((v) => <Viewport key={v.name} v={v} />)}
        </Views>
      </Body>

      <DocTabs>
        {["M8 1L3 5L8 9ZM1 1V9", "M7 1L2 5L7 9Z", "M3 1L8 5L3 9Z", "M2 1L7 5L2 9ZM9 1V9"].map((d) => (
          <NavButton key={d} aria-label="Scroll tabs">
            <svg viewBox="0 0 10 10"><path d={d} fill="#8a8a8a" stroke="#8a8a8a" /></svg>
          </NavButton>
        ))}
        <DocTab $w={57} $active>Model</DocTab>
        <DocTab $w={63}>3D Views</DocTab>
        <DocTab $w={104}>Motion Study 1</DocTab>
      </DocTabs>
      <SketchBar>
        <Dots />
        {SKETCH.map((n, i) =>
          n === "/" ? <Divider key={i} /> : <ToolButton key={i} $w={27} aria-label={n}><Icon name={n} /></ToolButton>
        )}
      </SketchBar>
    </Window>
  );
}
